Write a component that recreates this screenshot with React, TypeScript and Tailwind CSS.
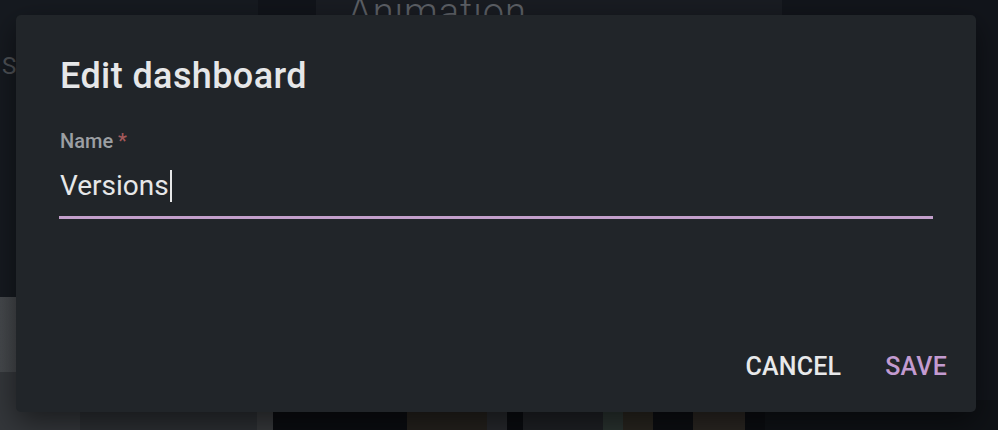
import React from 'react'

const Backdrop = () => (
    <div className="absolute inset-0">
        {/* page content behind the dimmed overlay */}
        <div className="absolute left-0 top-0 w-[258px] h-[297px] bg-[#161a20]" />
        <div className="absolute left-[258px] top-0 w-[58px] h-[20px] bg-[#11141a]" />
        <div className="absolute left-[316px] top-0 w-[466px] h-[20px] bg-[#191c22]" />
        <div className="absolute left-[782px] top-0 w-[216px] h-[430px] bg-[#12151b]" />
        <p className="absolute left-[348px] top-[-16px] text-[38px] font-light tracking-wide text-[#5d6066]">Animation</p>
        <p className="absolute left-[2px] top-[48px] text-[24px] text-[#4f5257]">Se</p>
        {/* lower left tiles */}
        <div className="absolute left-0 top-[297px] w-[80px] h-[75px] bg-gradient-to-r from-[#46494d] to-[#3c3f43]" />
        <div className="absolute left-0 top-[372px] w-[80px] h-[58px] bg-[#34373b]" />
        <div className="absolute left-[80px] top-[372px] w-[177px] h-[58px] bg-[#2c2f33]" />
        {/* photo strip */}
        <div className="absolute left-[257px] top-[400px] w-[508px] h-[30px] flex">
            <div className="w-[16px] bg-[#37393c]" />
            <div className="w-[134px] bg-[#0b0d11]" />
            <div className="w-[80px] bg-[#24211d]" />
            <div className="w-[20px] bg-[#26282c]" />
            <div className="w-[16px] bg-[#0a0c10]" />
            <div className="w-[80px] bg-[#1e2024]" />
            <div className="w-[20px] bg-[#2a3330]" />
            <div className="w-[30px] bg-[#28251f]" />
            <div className="w-[40px] bg-[#0c0e12]" />
            <div className="w-[52px] bg-[#2a2622]" />
            <div className="flex-1 bg-[#0b0d11]" />
        </div>
        <div className="absolute left-[765px] top-[400px] w-[233px] h-[30px] bg-[#0f1216]" />
    </div>
)

export default function App() {
    return (
        <div className="relative w-[998px] h-[430px] overflow-hidden bg-[#15181e]" style={{ fontFamily: 'Roboto, "Liberation Sans", sans-serif' }}>
            <Backdrop />
            <div className="absolute left-[16px] top-[15px] w-[960px] h-[397px] rounded-[5px] bg-[#212529] shadow-[0_10px_30px_rgba(0,0,0,0.5)] flex flex-col">
                <h2 className="pl-[44px] pt-[37px] text-[36px] leading-[48px] font-medium tracking-[0.4px] text-[#e6e7e8]">
                    Edit dashboard
                </h2>
                <div className="mx-[43px] mt-[29px]">
                    <label className="block pl-[1px] text-[20px] leading-[24px] font-medium text-[#9c9fa3]">
                        Name <span className="text-[#a3595a]">*</span>
                    </label>
                    <div className="mt-[15px] pb-[12px] pl-[1px] flex items-center border-b-[3px] border-[#c39fcb]">
                        <span className="text-[28px] leading-[36px] text-[#e6e7e8]">Versions</span>
                        <span className="ml-[1px] w-[2px] h-[32px] bg-[#e6e7e8]" />
                    </div>
                </div>
                <div className="mt-auto flex justify-end items-center gap-[44px] pr-[29px] pb-[29px]">
                    <button className="text-[25px] leading-[32px] font-medium tracking-[0.2px] text-[#e8e9ea]">CANCEL</button>
                    <button className="text-[25px] leading-[32px] font-medium tracking-[0.2px] text-[#c39bd0]">SAVE</button>
                </div>
            </div>
        </div>
    )
}
